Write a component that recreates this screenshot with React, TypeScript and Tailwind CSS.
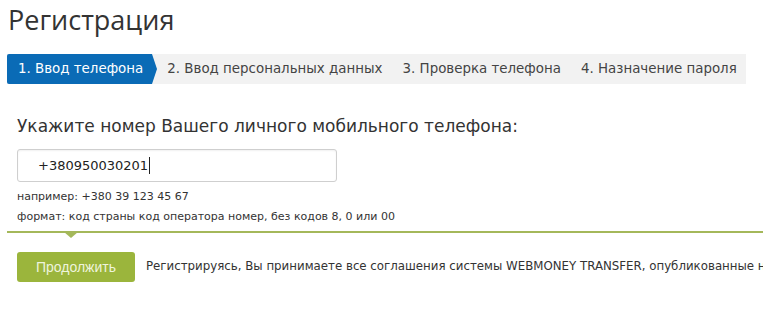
const steps = [
  '1. Ввод телефона',
  '2. Ввод персональных данных',
  '3. Проверка телефона',
  '4. Назначение пароля',
]

export default function App() {
  return (
    <div className="h-[314px] w-[763px] overflow-hidden bg-white font-['DejaVu_Sans',sans-serif] text-[#333]">
      <div className="w-[900px] pl-[7px]">
        <h1 className="pl-[1px] pt-[2px] font-['Open_Sans',sans-serif] text-[27px] leading-[36px] text-[#333]">
          Регистрация
        </h1>

        <div className="mt-[16px] flex h-[30px] w-[739px] items-center bg-[#f2f2f2] text-[13.4px]">
          {steps.map((step, i) =>
            i === 0 ? (
              <div key={step} className="relative flex h-full items-center rounded-l-[2px] bg-[#0a6bb6] pl-[11px] pr-[8px] text-white">
                {step}
                <svg className="absolute left-full top-0 h-[30px] w-[6px]" viewBox="0 0 6 30">
                  <polygon points="0,0 1,0 6,15 1,30 0,30" fill="#0a6bb6" />
                </svg>
              </div>
            ) : (
              <div key={step} className={`${i === 1 ? 'pl-[16px]' : 'pl-[20px]'} text-[#444]`}>
                {step}
              </div>
            )
          )}
        </div>

        <div className="pl-[10px]">
          <p className="mt-[31px] text-[17px] leading-[22px]">
            Укажите номер Вашего личного мобильного телефона:
          </p>
          <div className="mt-[12px] flex h-[33px] w-[320px] items-center rounded-[3px] border border-[#cfcfcf] pl-[20px] text-[13px] text-[#222] shadow-[inset_0_1px_2px_rgba(0,0,0,0.06)]">
            +380950030201
            <span className="ml-[1px] inline-block h-[17px] w-px bg-[#222]" />
          </div>
          <p className="mt-[8px] text-[11px] leading-[14px]">например: +380 39 123 45 67</p>
          <p className="mt-[6px] text-[11px] leading-[14px]">
            формат: код страны код оператора номер, без кодов 8, 0 или 00
          </p>
        </div>

        <div className="relative mt-[7px] h-[2px] w-[800px] bg-[#a4b85a]">
          <svg className="absolute left-[57px] top-[1px] h-[7px] w-[14px]" viewBox="0 0 14 7">
            <polygon points="0,0 14,0 7,6" fill="#a4b85a" />
          </svg>
        </div>

        <div className="mt-[19px] flex items-center gap-[11px] pl-[10px]">
          <button
            type="button"
            className="h-[30px] w-[118px] shrink-0 rounded-[3px] bg-[#9bb53c] font-['Liberation_Sans',sans-serif] text-[14px] text-[#eef4dc]"
          >
            Продолжить
          </button>
          <p className="whitespace-nowrap text-[11.8px]">
            Регистрируясь, Вы принимаете все соглашения системы WEBMONEY TRANSFER, опубликованные на сайте
          </p>
        </div>
      </div>
    </div>
  )
}
